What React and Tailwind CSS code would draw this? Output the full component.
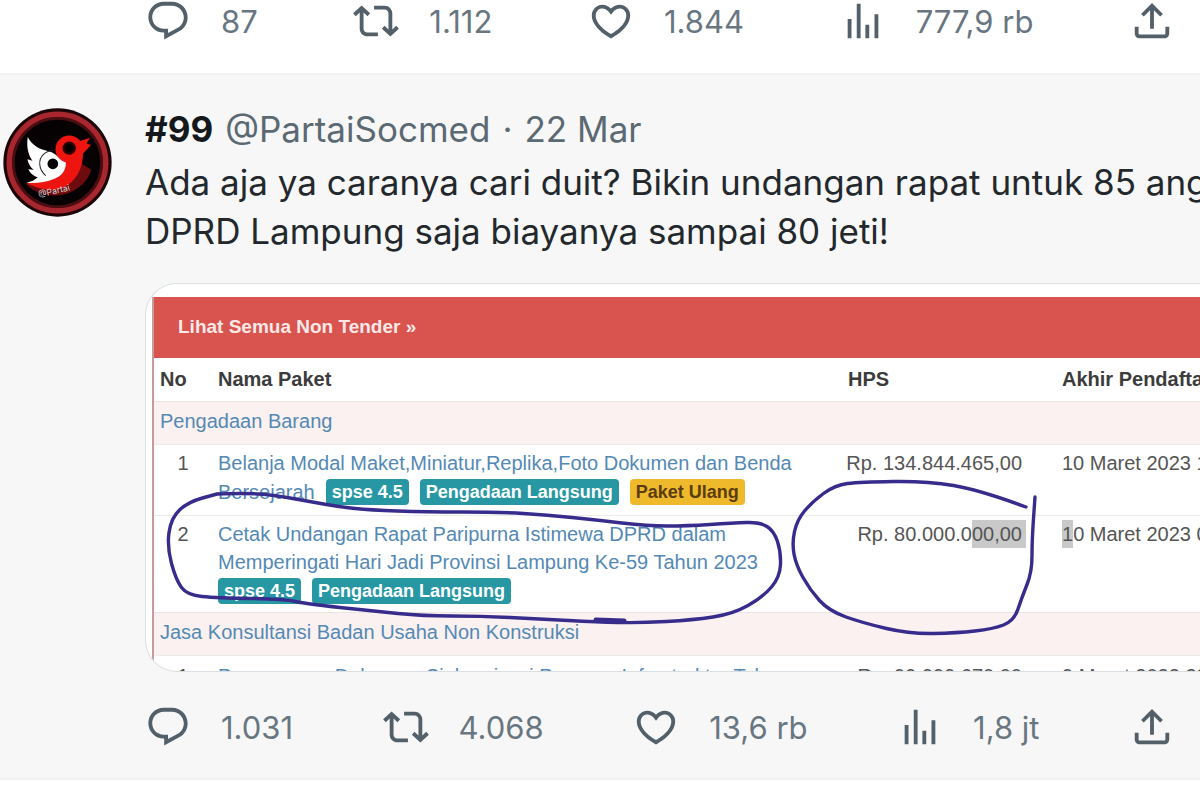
import React from "react";

const icons = {
  reply:
    "M1.751 10c0-4.42 3.584-8 8.005-8h4.366c4.49 0 8.129 3.64 8.129 8.13 0 2.96-1.607 5.68-4.196 7.11l-8.054 4.46v-3.69h-.067c-4.49.1-8.183-3.51-8.183-8.01zm8.005-6c-3.317 0-6.005 2.69-6.005 6 0 3.37 2.77 6.08 6.138 6.01l.351-.01h1.761v2.3l5.087-2.81c1.951-1.08 3.163-3.13 3.163-5.36 0-3.39-2.744-6.13-6.129-6.13H9.756z",
  retweet:
    "M4.5 3.88l4.432 4.14-1.364 1.46L5.5 7.55V16c0 1.1.896 2 2 2H13v2H7.5c-2.209 0-4-1.79-4-4V7.55L1.432 9.48.068 8.02 4.5 3.88zM16.5 6H11V4h5.5c2.209 0 4 1.79 4 4v8.45l2.068-1.93 1.364 1.46-4.432 4.14-4.432-4.14 1.364-1.46 2.068 1.93V8c0-1.1-.896-2-2-2z",
  like:
    "M16.697 5.5c-1.222-.06-2.679.51-3.89 2.16l-.805 1.09-.806-1.09C9.984 6.01 8.526 5.44 7.304 5.5c-1.243.07-2.349.78-2.91 1.91-.552 1.12-.633 2.78.479 4.82 1.074 1.97 3.257 4.27 7.129 6.61 3.87-2.34 6.052-4.64 7.126-6.61 1.111-2.04 1.03-3.7.477-4.82-.561-1.13-1.666-1.84-2.908-1.91zm4.187 7.69c-1.351 2.48-4.001 5.12-8.379 7.67l-.503.3-.504-.3c-4.379-2.55-7.029-5.19-8.382-7.67-1.36-2.5-1.41-4.86-.514-6.67.887-1.79 2.647-2.91 4.601-3.01 1.651-.09 3.368.56 4.798 2.01 1.429-1.45 3.146-2.1 4.796-2.01 1.954.1 3.714 1.22 4.601 3.01.896 1.81.846 4.17-.514 6.67z",
  views:
    "M8.75 21V3h2v18h-2zM18 21V8.5h2V21h-2zM4 21l.004-10h2L6 21H4zm9.248 0v-7h2v7h-2z",
  share:
    "M12 2.59l5.7 5.7-1.41 1.42L13 6.41V16h-2V6.41l-3.3 3.3-1.41-1.42L12 2.59zM21 15l-.02 3.51c0 1.38-1.12 2.49-2.5 2.49H5.5C4.11 21 3 19.88 3 18.5V15h2v3.5c0 .28.22.5.5.5h12.98c.28 0 .5-.22.5-.5L19 15h2z",
};

const ActionButton = ({ icon, label, count }) => (
  <button
    type="button"
    aria-label={label}
    className="flex items-center gap-[30px] h-[42px] text-[31px] text-[#687681] whitespace-nowrap cursor-pointer"
  >
    <svg viewBox="0 0 24 24" className="w-[46px] h-[46px] shrink-0 fill-[#536069]">
      <path d={icons[icon]} />
    </svg>
    {count && <span className="pt-[2px]">{count}</span>}
  </button>
);

const Actions = ({ replies, retweets, likes, views }) => (
  <div className="flex items-center justify-between pr-[25px]">
    <ActionButton icon="reply" label="Balas" count={replies} />
    <ActionButton icon="retweet" label="Posting ulang" count={retweets} />
    <ActionButton icon="like" label="Suka" count={likes} />
    <ActionButton icon="views" label="Tayangan" count={views} />
    <ActionButton icon="share" label="Bagikan" />
  </div>
);

const Avatar = () => (
  <svg viewBox="8 23 326 326" className="w-[109px] h-[109px]">
    <circle cx="171" cy="186" r="162" fill="#1a0508" />
    <circle cx="171" cy="186" r="144" fill="#060203" stroke="#a8262d" strokeWidth="17" />
    <circle cx="171" cy="186" r="132" fill="none" stroke="#4a0d11" strokeWidth="8" />
    {/* swoosh */}
    <path d="M76 249c40 8 84 2 110-16 22-15 34-32 40-52l46 26c-8 32-34 58-72 72-44 14-96 2-124-30z" fill="#6d0b0e" />
    <path d="M78 247c44 2 84-10 104-34 12-14 16-28 14-44l50-30c6 48-10 92-46 116-36 22-82 12-122-8z" fill="#ee1410" />
    {/* wing */}
    <path
      d="M82 110c10 18 22 30 46 38 20 4 34 10 44 20l24 14c2 26-12 46-38 54-26 10-56 14-80 10 14-2 26-8 34-16-14-4-24-14-28-24l16 2c-10-8-17-20-19-32l15 5c-10-14-19-36-14-71z"
      fill="#fff"
    />
    <path d="M136 225c-22-18-24-48-6-64 8-8 18-11 28-11" fill="none" stroke="#222" strokeWidth="3" />
    <circle cx="157" cy="190" r="16" fill="#050505" />
    {/* head */}
    <circle cx="206" cy="146" r="41" fill="#ee1410" />
    <path d="M232 124l36-12-10 17 13 5-26 28z" fill="#ee1410" />
    <circle cx="206" cy="143" r="20" fill="#2a0304" />
    <circle cx="206" cy="143" r="12" fill="#000" />
    <text x="116" y="291" fontSize="26" fill="#d8d8d8" transform="rotate(-13 116 291)">
      @Partai
    </text>
  </svg>
);

const Badge = ({ children, warning }) => (
  <span
    className={`h-[26px] px-[6px] rounded text-[18px] leading-[26px] font-bold ${
      warning ? "bg-[#efb92c] text-[#5a3d0c]" : "bg-[#2798a3] text-white"
    }`}
  >
    {children}
  </span>
);

const SectionRow = ({ title }) => (
  <tr className="h-[43px] bg-[#fbf1f0] border-t border-[#eae4e3]">
    <td colSpan="4" className="px-[6px] pb-[4px] text-[#5389b4]">
      <a href="#kategori">{title}</a>
    </td>
  </tr>
);

const toPath = (points) => {
  let d = `M${points[0].join(" ")}`;
  for (let i = 1; i < points.length - 1; i++) {
    const [x, y] = points[i];
    const [nx, ny] = points[i + 1];
    d += ` Q${x} ${y} ${(x + nx) / 2} ${(y + ny) / 2}`;
  }
  return `${d} L${points[points.length - 1].join(" ")}`;
};

const packageCircle = [
  [217, 494], [245, 493], [273, 495], [307, 501], [340, 507], [370, 510], [425, 512], [500, 512], [547, 515],
  [597, 520], [647, 526], [687, 526], [733, 523], [760, 522], [774, 531], [781, 552], [780, 577],
  [763, 597], [733, 614], [693, 620], [640, 623], [597, 622], [540, 619], [480, 616], [423, 616],
  [373, 611], [307, 604], [284, 599], [217, 598], [187, 595], [176, 580], [167, 547], [171, 518],
  [188, 502], [217, 494],
];

const priceCircle = [
  [1026, 507], [980, 490], [927, 481], [860, 482], [835, 485], [812, 502], [797, 520], [792, 543],
  [796, 565], [810, 590], [829, 611], [863, 623], [910, 634], [957, 633], [993, 629], [1014, 621],
  [1022, 597], [1032, 572], [1032, 540], [1035, 497],
];

// Pen marks on top of the attached picture
const PenMarks = () => (
  <svg
    viewBox="146 284 1054 388"
    className="absolute top-0 left-0 w-[1054px] h-[388px] pointer-events-none"
    fill="none"
    stroke="#372c8c"
    strokeWidth="3.4"
    strokeLinecap="round"
  >
    <path d={toPath(packageCircle)} />
    <path d="M596 620l28 1" strokeWidth="5" />
    <path d={toPath(priceCircle)} />
  </svg>
);

const TenderTable = () => (
  <table className="w-full table-fixed border-collapse text-[20px] leading-[28px] text-[#555]">
    <colgroup>
      <col className="w-[58px]" />
      <col className="w-[630px]" />
      <col className="w-[214px]" />
      <col />
    </colgroup>
    <thead>
      <tr className="h-[43px] text-left text-[#3c3c3c]">
        <th className="px-[6px]">No</th>
        <th className="px-[6px]">Nama Paket</th>
        <th className="px-[6px]">HPS</th>
        <th className="px-[6px] whitespace-nowrap">Akhir Pendaftaran</th>
      </tr>
    </thead>
    <tbody>
      <SectionRow title="Pengadaan Barang" />
      <tr className="h-[71px] align-top border-t border-[#ebebeb]">
        <td className="py-1 text-center">1</td>
        <td className="px-[6px] py-1 text-[#5389b4] whitespace-nowrap">
          <a href="#paket-1">Belanja Modal Maket,Miniatur,Replika,Foto Dokumen dan Benda</a>
          <div className="flex items-center h-[30px] gap-[11px]">
            <a href="#paket-1">Bersejarah</a>
            <Badge>spse 4.5</Badge>
            <Badge>Pengadaan Langsung</Badge>
            <Badge warning>Paket Ulang</Badge>
          </div>
        </td>
        <td className="pr-[34px] py-1 text-right whitespace-nowrap">Rp. 134.844.465,00</td>
        <td className="px-[6px] py-1 whitespace-nowrap">10 Maret 2023 13:00</td>
      </tr>
      <tr className="h-[97px] align-top border-t border-[#ebebeb]">
        <td className="py-1 text-center">2</td>
        <td className="px-[6px] py-1 text-[#5389b4] whitespace-nowrap">
          <a href="#paket-2">
            Cetak Undangan Rapat Paripurna Istimewa DPRD dalam
            <br />
            Memperingati Hari Jadi Provinsi Lampung Ke-59 Tahun 2023
          </a>
          <div className="flex items-center h-[30px] gap-[11px]">
            <Badge>spse 4.5</Badge>
            <Badge>Pengadaan Langsung</Badge>
          </div>
        </td>
        <td className="pr-[34px] py-1 text-right whitespace-nowrap">
          Rp. 80.000.0<span className="inline-block bg-[#c9c9c9] pr-1 -mr-1">00,00</span>
        </td>
        <td className="px-[6px] py-1 whitespace-nowrap">
          <span className="inline-block bg-[#c9c9c9]">1</span>0 Maret 2023 09:00
        </td>
      </tr>
      <SectionRow title="Jasa Konsultansi Badan Usaha Non Konstruksi" />
      <tr className="align-top border-t border-[#ebebeb]">
        <td className="py-[6px] text-center">1</td>
        <td className="px-[6px] py-[6px] text-[#5389b4] whitespace-nowrap">
          <a href="#paket-3">Penyusunan Dokumen Sinkronisasi Program Infrastruktur Tahunan</a>
        </td>
        <td className="pr-[34px] py-[6px] text-right whitespace-nowrap">Rp. 99.999.670,00</td>
        <td className="px-[6px] py-[6px] whitespace-nowrap">9 Maret 2023 23:00</td>
      </tr>
    </tbody>
  </table>
);

const App = () => {
  return (
    <main className="w-full min-h-screen bg-white overflow-hidden font-[Inter,sans-serif]">
      <article className="pl-[145px] pb-[31px]">
        <Actions replies="87" retweets="1.112" likes="1.844" views="777,9 rb" />
      </article>

      <article className="flex gap-[33px] bg-[#f7f7f7] border-y-2 border-[#f1f3f3] pt-[30px] pb-[30px] pl-[3px]">
        <a href="#profil" aria-label="#99" className="shrink-0 pt-[3px]">
          <Avatar />
        </a>
        <div className="flex-1 min-w-0">
          <header className="flex items-center gap-3 h-12 text-[35px] text-[#5b6973] whitespace-nowrap">
            <a href="#profil" className="font-bold text-[#14181c]">#99</a>
            <a href="#profil">@PartaiSocmed</a>
            <span>·</span>
            <time dateTime="2023-03-22">22 Mar</time>
          </header>
          <p className="mt-[5px] text-[35px] leading-[49px] text-[#23282d] whitespace-nowrap">
            Ada aja ya caranya cari duit? Bikin undangan rapat untuk 85 anggota
            <br />
            DPRD Lampung saja biayanya sampai 80 jeti!
          </p>

          <div className="relative mt-[27px] h-[389px] overflow-hidden rounded-l-[32px] border border-r-0 border-[#d9dfe2] bg-white font-['Liberation_Sans',Arial,sans-serif]">
            <div className="mt-[13px] ml-[6px] border-l-2 border-[#c99a9a]">
              <div className="flex items-center h-[61px] pl-[24px] bg-[#d9534f] text-[19px] font-bold text-[#fbe9e7]">
                <a href="#non-tender">Lihat Semua Non Tender »</a>
              </div>
              <TenderTable />
            </div>
            <PenMarks />
          </div>

          <div className="mt-[34px]">
            <Actions replies="1.031" retweets="4.068" likes="13,6 rb" views="1,8 jt" />
          </div>
        </div>
      </article>
    </main>
  );
};

export default App;
